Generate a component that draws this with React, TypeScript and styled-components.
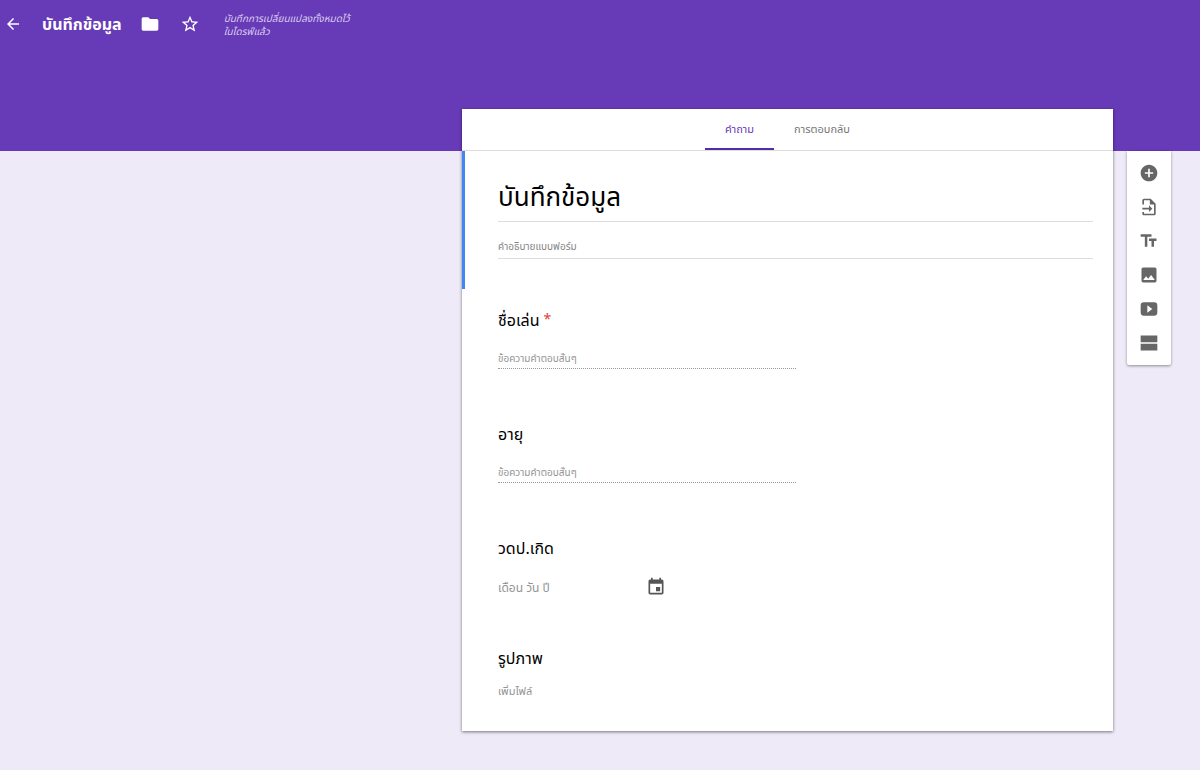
import React from "react";
import styled, { createGlobalStyle } from "styled-components";

const GlobalStyle = createGlobalStyle`
  * { box-sizing: border-box; }
  body {
    margin: 0;
    background: #eeeaf8;
    color: #000;
    font-family: "Noto Sans", "Noto Sans Thai", "DejaVu Sans", sans-serif;
  }
  button, input { font: inherit; color: inherit; }
`;

const Header = styled.header`
  display: flex;
  align-items: flex-start;
  min-height: 151px;
  padding: 12px 4px;
  background: #673ab7;
  color: #fff;
`;

const IconButton = styled.button`
  display: flex;
  align-items: center;
  justify-content: center;
  width: 44px;
  height: 34px;
  padding: 0;
  border: 0;
  background: none;
  color: #666;
  cursor: pointer;
`;

const HeaderButton = styled(IconButton)<{ $width: number }>`
  width: ${(p) => p.$width}px;
  height: 24px;
  color: #fff;
`;

const DocumentName = styled.h1`
  margin: 0 8px 0 20px;
  font-size: 16px;
  font-weight: 700;
  line-height: 24px;
  white-space: nowrap;
`;

const SaveStatus = styled.p`
  width: 144px;
  margin: 0 0 0 14px;
  color: #d9cdee;
  font-size: 10px;
  font-style: italic;
  line-height: 13px;
`;

const Main = styled.main`
  display: flex;
  align-items: flex-start;
  justify-content: flex-end;
  gap: 14px;
  margin-top: -42px;
  padding: 0 29px 39px;
`;

const Card = styled.form`
  flex: 0 1 651px;
  min-width: 0;
  background: #fff;
  box-shadow: 0 1px 3px rgba(0, 0, 0, 0.5);
`;

const Tabs = styled.div`
  display: flex;
  justify-content: center;
  height: 42px;
  border-bottom: 1px solid #dedede;
`;

const Tab = styled.button<{ $active?: boolean }>`
  height: 41px;
  padding: 0 20px;
  border: 0;
  border-bottom: 2px solid ${(p) => (p.$active ? "#512da8" : "transparent")};
  background: none;
  color: ${(p) => (p.$active ? "#673ab7" : "#757575")};
  font-size: 11px;
  line-height: 16px;
  cursor: pointer;
`;

const TitleSection = styled.section`
  padding: 24px 20px 30px 33px;
  border-left: 3px solid #4285f4;
`;

const TitleInput = styled.input`
  display: block;
  width: 100%;
  height: 47px;
  padding: 0;
  border: 0;
  border-bottom: 1px solid #dedede;
  background: none;
  font-size: 26px;
`;

const DescriptionInput = styled.input`
  display: block;
  width: 100%;
  height: 25px;
  margin-top: 12px;
  padding: 0;
  border: 0;
  border-bottom: 1px solid #dedede;
  background: none;
  font-size: 10px;
  &::placeholder { color: #858585; opacity: 1; }
`;

const Question = styled.section<{ $bottom?: number }>`
  padding: 19px 20px ${(p) => p.$bottom ?? 34}px 36px;
`;

const QuestionLabel = styled.label`
  display: block;
  font-size: 16px;
  line-height: 24px;
`;

const Required = styled.span`
  color: #db4437;
  font-size: 14px;
  margin-left: 4px;
  vertical-align: 2px;
  line-height: 16px;
`;

const ShortAnswer = styled.input`
  display: block;
  width: 50%;
  height: 22px;
  margin-top: 15px;
  padding: 0;
  border: 0;
  border-bottom: 1px dotted #999;
  background: none;
  font-size: 10px;
  &::placeholder { color: #949494; opacity: 1; }
`;

const DateField = styled.div`
  display: flex;
  align-items: center;
  justify-content: space-between;
  width: 168px;
  height: 24px;
  margin-top: 15px;
  color: #555;
`;

const DateInput = styled.input`
  width: 120px;
  height: 24px;
  padding: 0;
  border: 0;
  background: none;
  font-size: 12px;
  &::placeholder { color: #949494; opacity: 1; }
`;

const AddFile = styled.button`
  display: block;
  height: 22px;
  margin-top: 10px;
  padding: 0;
  border: 0;
  background: none;
  color: #949494;
  font-size: 11px;
  line-height: 22px;
`;

const Toolbar = styled.aside`
  flex: none;
  width: 44px;
  margin-top: 42px;
  padding: 5px 0;
  background: #fff;
  border-radius: 0 0 2px 2px;
  box-shadow: 0 1px 3px rgba(0, 0, 0, 0.4);
`;

const Icon = ({ d, size = 20 }: { d: string; size?: number }) => (
  <svg width={size} height={size} viewBox="0 0 24 24" fill="currentColor" aria-hidden="true">
    <path fillRule="evenodd" d={d} />
  </svg>
);

const paths = {
  back: "M20 11H7.83l5.59-5.59L12 4l-8 8 8 8 1.41-1.41L7.83 13H20v-2z",
  folder: "M10 4H4c-1.1 0-1.99.9-1.99 2L2 18c0 1.100.9 2 2 2h16c1.100 0 2-.9 2-2V8c0-1.100-.9-2-2-2h-8l-2-2z",
  star: "M22 9.240l-7.190-.620L12 2 9.190 8.630 2 9.240l5.460 4.730L5.820 21 12 17.270 18.180 21l-1.630-7.030L22 9.240zM12 15.400l-3.760 2.270 1-4.280-3.320-2.880 4.380-.380L12 6.100l1.710 4.040 4.380.380-3.320 2.880 1 4.280L12 15.400z",
  calendar: "M17 12h-5v5h5v-5zM16 1v2H8V1H6v2H5c-1.110 0-1.990.9-1.990 2L3 19c0 1.100.89 2 2 2h14c1.100 0 2-.9 2-2V5c0-1.100-.9-2-2-2h-1V1h-2zm3 18H5V8h14v11z",
};

const tools = [
  { label: "เพิ่มคำถาม", d: "M12 2C6.480 2 2 6.480 2 12s4.480 10 10 10 10-4.480 10-10S17.520 2 12 2zm5 11h-4v4h-2v-4H7v-2h4V7h2v4h4v2z" },
  { label: "นำเข้าคำถาม", d: "M14 2H6C4.900 2 4 2.900 4 4V9H6V4H13V9H18V20H6V18H4V20C4 21.100 4.900 22 6 22H18C19.100 22 20 21.100 20 20V8L14 2ZM12 18L16 14 12 10V13H4V15H12V18Z" },
  { label: "เพิ่มชื่อและรายละเอียด", d: "M2 4v3h5v12h3V7h5V4H2zm19 5h-9v3h3v7h3v-7h3V9z" },
  { label: "เพิ่มรูปภาพ", d: "M21 19V5c0-1.100-.9-2-2-2H5c-1.100 0-2 .9-2 2v14c0 1.100.9 2 2 2h14c1.100 0 2-.9 2-2zM8.500 13.500l2.500 3.010L14.500 12l4.500 6H5l3.500-4.500z" },
  { label: "เพิ่มวิดีโอ", d: "M6 4H18C21 4 22 5 22 8V16C22 19 21 20 18 20H6C3 20 2 19 2 16V8C2 5 3 4 6 4ZM10 7.500V16.500L16 12Z" },
  { label: "เพิ่มส่วน", d: "M2 3H22V11H2ZM2 13H22V21H2Z" },
];

export default function App() {
  return (
    <>
      <GlobalStyle />
      <Header>
        <HeaderButton $width={18} aria-label="กลับ"><Icon d={paths.back} /></HeaderButton>
        <DocumentName>บันทึกข้อมูล</DocumentName>
        <HeaderButton $width={40} aria-label="โฟลเดอร์"><Icon d={paths.folder} /></HeaderButton>
        <HeaderButton $width={40} aria-label="ติดดาว"><Icon d={paths.star} /></HeaderButton>
        <SaveStatus>บันทึกการเปลี่ยนแปลงทั้งหมดไว้<br />ในไดรฟ์แล้ว</SaveStatus>
      </Header>
      <Main>
        <Card>
          <Tabs role="tablist">
            <Tab type="button" role="tab" aria-selected="true" $active>คำถาม</Tab>
            <Tab type="button" role="tab" aria-selected="false">การตอบกลับ</Tab>
          </Tabs>
          <TitleSection>
            <TitleInput aria-label="ชื่อแบบฟอร์ม" defaultValue="บันทึกข้อมูล" />
            <DescriptionInput aria-label="คำอธิบายแบบฟอร์ม" placeholder="คำอธิบายแบบฟอร์ม" />
          </TitleSection>
          <Question>
            <QuestionLabel htmlFor="nickname">ชื่อเล่น<Required>*</Required></QuestionLabel>
            <ShortAnswer id="nickname" placeholder="ข้อความคำตอบสั้นๆ" />
          </Question>
          <Question>
            <QuestionLabel htmlFor="age">อายุ</QuestionLabel>
            <ShortAnswer id="age" placeholder="ข้อความคำตอบสั้นๆ" />
          </Question>
          <Question $bottom={28}>
            <QuestionLabel htmlFor="birthday">วดป.เกิด</QuestionLabel>
            <DateField>
              <DateInput id="birthday" placeholder="เดือน วัน ปี" />
              <Icon d={paths.calendar} />
            </DateField>
          </Question>
          <Question $bottom={29}>
            <QuestionLabel htmlFor="photo">รูปภาพ</QuestionLabel>
            <AddFile id="photo" type="button">เพิ่มไฟล์</AddFile>
          </Question>
        </Card>
        <Toolbar>
          {tools.map((tool) => (
            <IconButton key={tool.label} type="button" aria-label={tool.label}>
              <Icon d={tool.d} />
            </IconButton>
          ))}
        </Toolbar>
      </Main>
    </>
  );
}
